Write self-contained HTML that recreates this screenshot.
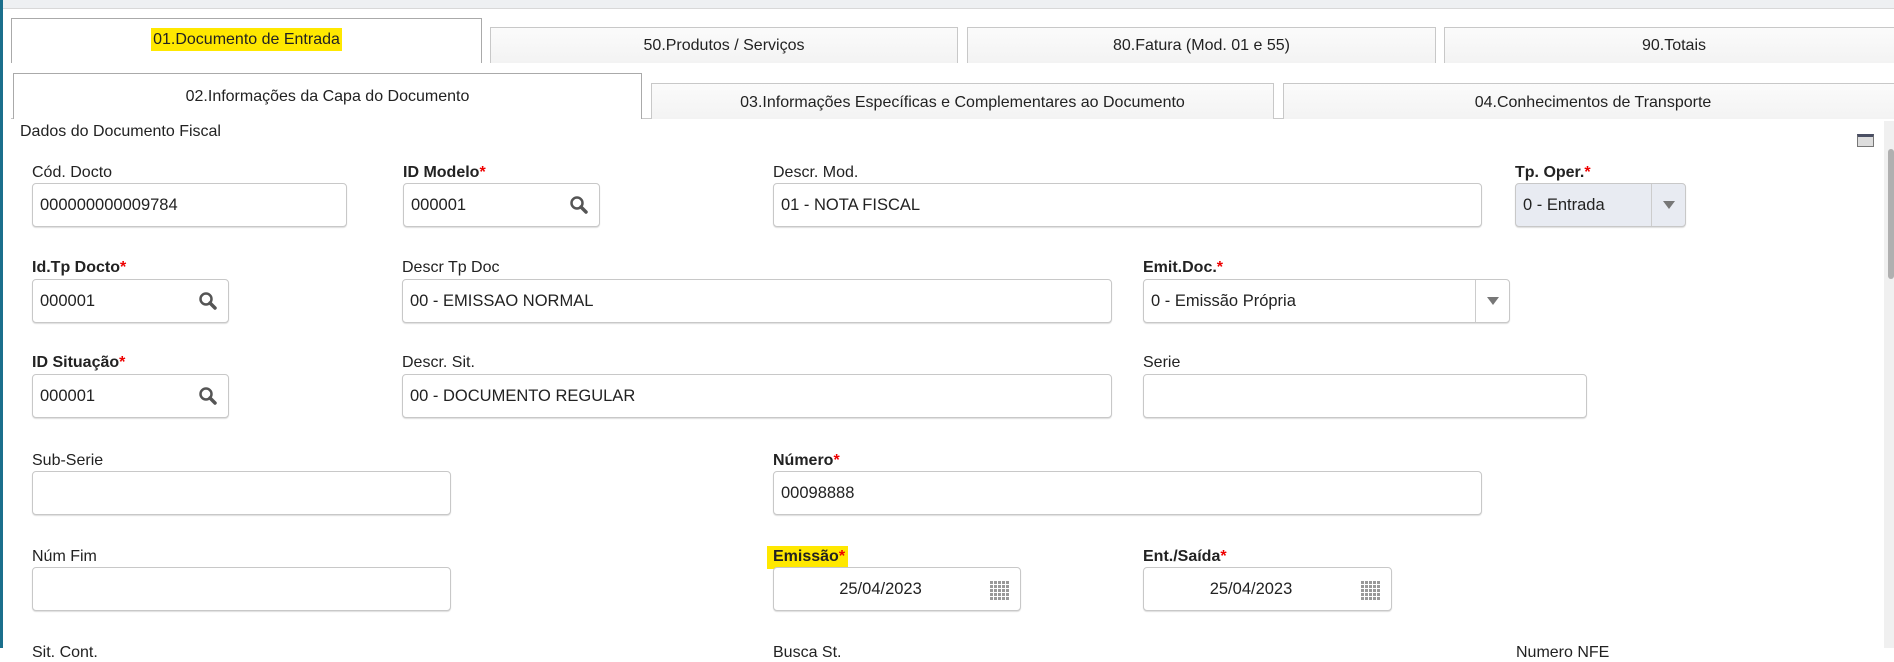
<!DOCTYPE html>
<html><head><meta charset="utf-8"><style>
*{box-sizing:border-box;margin:0;padding:0}
body{width:1894px;height:648px;overflow:hidden;background:#fff;font-family:"Liberation Sans",Arial,sans-serif;color:#222;position:relative}
.a{position:absolute}
.tab{position:absolute;border:1px solid #c8c8c8;border-bottom:none;background:linear-gradient(#fbfbfb,#f3f3f3);font-size:16px;text-align:center;color:#222}
.tab.act{background:#fff;border-color:#aaa}
.lbl{position:absolute;font-size:16px;color:#222;white-space:nowrap;margin-top:2px}
.b{font-weight:bold}
.r{color:#e00}
.in{position:absolute;height:44px;border:1px solid #c8c8c8;border-radius:4px;background:#fff;box-shadow:0 1px 1px #ddd;font-size:16.5px;padding-left:7px;line-height:42px;white-space:nowrap}
.hl{background:#ffe800}
.sel .dd{position:absolute;right:0;top:0;width:34px;height:42px;border-left:1px solid #ccc}
.sel .dd:after{content:"";position:absolute;left:11px;top:17px;border-left:6px solid transparent;border-right:6px solid transparent;border-top:8px solid #777}
.srch{position:absolute;right:10px;top:11px}
.cal{position:absolute;right:10px;top:12px;width:20px;height:20px;background:
repeating-linear-gradient(90deg,#999 0 3px,transparent 3px 4px),#fff;}
.cal:before{content:"";position:absolute;inset:0;background:repeating-linear-gradient(0deg,transparent 0 3px,#fff 3px 4px)}
</style></head><body>
<div class="a" style="left:0;top:0;width:3px;height:648px;background:#1b6f8c"></div>
<div class="a" style="left:3px;top:0;width:1891px;height:9px;background:#eef0f2;border-bottom:1px solid #d8d8d8"></div>

<div class="tab act" style="left:11px;top:18px;width:471px;height:45px;line-height:42px"><span class="hl" style="padding:3px 2px">01.Documento de Entrada</span></div>
<div class="tab" style="left:490px;top:27px;width:468px;height:36px;line-height:36px">50.Produtos / Serviços</div>
<div class="tab" style="left:967px;top:27px;width:469px;height:36px;line-height:36px">80.Fatura (Mod. 01 e 55)</div>
<div class="tab" style="left:1444px;top:27px;width:460px;height:36px;line-height:36px">90.Totais</div>

<div class="a" style="left:11px;top:118px;width:1883px;height:1px;background:#c8c8c8"></div>
<div class="tab act" style="left:13px;top:73px;width:629px;height:46px;line-height:46px;background:#fff">02.Informações da Capa do Documento</div>
<div class="tab" style="left:651px;top:83px;width:623px;height:36px;line-height:37px">03.Informações Específicas e Complementares ao Documento</div>
<div class="tab" style="left:1283px;top:83px;width:620px;height:36px;line-height:37px">04.Conhecimentos de Transporte</div>

<div class="lbl" style="left:20px;top:121px">Dados do Documento Fiscal</div>
<div class="a" style="left:1857px;top:134px;width:17px;height:13px;border:1px solid #777;border-top:3px solid #4a4f63;background:#ddd"></div>
<div class="a" style="left:1884px;top:121px;width:10px;height:527px;background:#f0f0f0"></div>
<div class="a" style="left:1888px;top:149px;width:6px;height:130px;background:#b0b0b0;border-radius:3px"></div>

<!-- row1 -->
<div class="lbl" style="left:32px;top:162px">Cód. Docto</div>
<div class="in" style="left:32px;top:183px;width:315px">000000000009784</div>
<div class="lbl b" style="left:403px;top:162px">ID Modelo<span class="r">*</span></div>
<div class="in" style="left:403px;top:183px;width:197px">000001<svg class="srch" width="20" height="20" viewBox="0 0 20 20"><circle cx="8" cy="8" r="5.5" fill="none" stroke="#555" stroke-width="2.5"/><path d="M12 12l5 5" stroke="#555" stroke-width="3.5" stroke-linecap="round"/></svg></div>
<div class="lbl" style="left:773px;top:162px">Descr. Mod.</div>
<div class="in" style="left:773px;top:183px;width:709px">01 - NOTA FISCAL</div>
<div class="lbl b" style="left:1515px;top:162px">Tp. Oper.<span class="r">*</span></div>
<div class="in sel" style="left:1515px;top:183px;width:171px;background:#e8ebf2">0 - Entrada<div class="dd"></div></div>

<!-- row2 -->
<div class="lbl b" style="left:32px;top:257px">Id.Tp Docto<span class="r">*</span></div>
<div class="in" style="left:32px;top:279px;width:197px">000001<svg class="srch" width="20" height="20" viewBox="0 0 20 20"><circle cx="8" cy="8" r="5.5" fill="none" stroke="#555" stroke-width="2.5"/><path d="M12 12l5 5" stroke="#555" stroke-width="3.5" stroke-linecap="round"/></svg></div>
<div class="lbl" style="left:402px;top:257px">Descr Tp Doc</div>
<div class="in" style="left:402px;top:279px;width:710px">00 - EMISSAO NORMAL</div>
<div class="lbl b" style="left:1143px;top:257px">Emit.Doc.<span class="r">*</span></div>
<div class="in sel" style="left:1143px;top:279px;width:367px">0 - Emissão Própria<div class="dd"></div></div>

<!-- row3 -->
<div class="lbl b" style="left:32px;top:352px">ID Situação<span class="r">*</span></div>
<div class="in" style="left:32px;top:374px;width:197px">000001<svg class="srch" width="20" height="20" viewBox="0 0 20 20"><circle cx="8" cy="8" r="5.5" fill="none" stroke="#555" stroke-width="2.5"/><path d="M12 12l5 5" stroke="#555" stroke-width="3.5" stroke-linecap="round"/></svg></div>
<div class="lbl" style="left:402px;top:352px">Descr. Sit.</div>
<div class="in" style="left:402px;top:374px;width:710px">00 - DOCUMENTO REGULAR</div>
<div class="lbl" style="left:1143px;top:352px">Serie</div>
<div class="in" style="left:1143px;top:374px;width:444px"></div>

<!-- row4 -->
<div class="lbl" style="left:32px;top:450px">Sub-Serie</div>
<div class="in" style="left:32px;top:471px;width:419px"></div>
<div class="lbl b" style="left:773px;top:450px">Número<span class="r">*</span></div>
<div class="in" style="left:773px;top:471px;width:709px">00098888</div>

<!-- row5 -->
<div class="lbl" style="left:32px;top:546px">Núm Fim</div>
<div class="in" style="left:32px;top:567px;width:419px"></div>
<div class="lbl b" style="left:773px;top:546px"><span class="hl" style="padding:2px 3px 4px 6px;margin-left:-6px">Emissão<span class="r">*</span></span></div>
<div class="in" style="left:773px;top:567px;width:248px;text-align:center;padding-right:40px">25/04/2023<div class="cal"></div></div>
<div class="lbl b" style="left:1143px;top:546px">Ent./Saída<span class="r">*</span></div>
<div class="in" style="left:1143px;top:567px;width:249px;text-align:center;padding-right:40px">25/04/2023<div class="cal"></div></div>

<!-- row6 cut -->
<div class="lbl" style="left:32px;top:642px">Sit. Cont.</div>
<div class="lbl" style="left:773px;top:642px">Busca St.</div>
<div class="lbl" style="left:1516px;top:642px">Numero NFE</div>
</body></html>
